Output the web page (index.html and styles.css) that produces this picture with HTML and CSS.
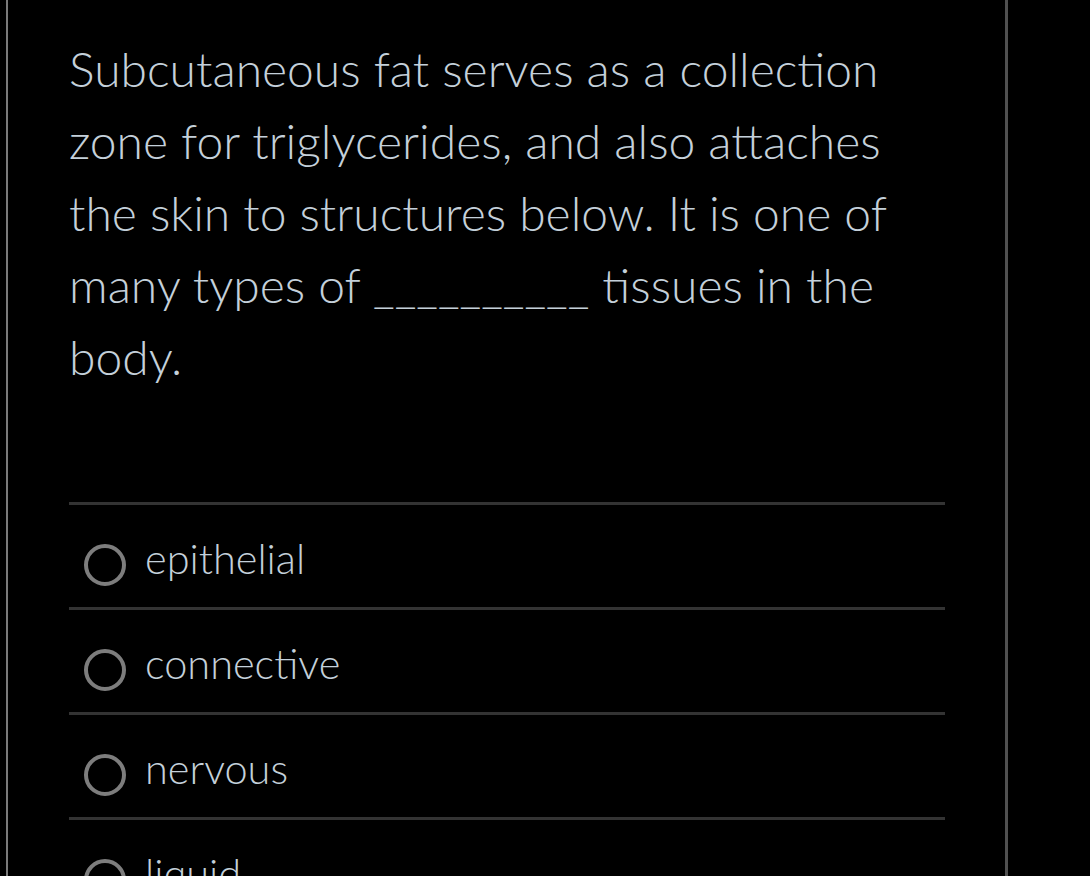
FILE: index.html
```html
<!DOCTYPE html>
<html lang="en">
<head>
<meta charset="utf-8">
<title>Question</title>
<link rel="stylesheet" href="styles.css">
</head>
<body>
<div class="card">
  <p class="question">Subcutaneous fat serves as a collection zone for triglycerides, and also attaches the skin to structures below. It is one of many types of <span class="blank">__________</span> tissues in the body.</p>
  <ul class="options">
    <li class="option"><span class="radio"></span><span class="label">epithelial</span></li>
    <li class="option"><span class="radio"></span><span class="label">connective</span></li>
    <li class="option"><span class="radio"></span><span class="label">nervous</span></li>
    <li class="option"><span class="radio"></span><span class="label">liquid</span></li>
  </ul>
</div>
</body>
</html>
```

FILE: styles.css
```css
html, body {
  margin: 0;
  padding: 0;
  background: #000;
  height: 100%;
  overflow: hidden;
}

.card {
  margin-left: 6px;
  width: 1002px;
  box-sizing: border-box;
  min-height: 1200px;
  border-left: 2px solid #7a7a7a;
  border-right: 3px solid #505050;
  padding: 33px 60px 0 61px;
  font-family: Lato, "Open Sans", sans-serif;
  font-weight: 300;
  color: #c4d0da;
}

.question {
  margin: 0;
  font-size: 48px;
  line-height: 72px;
}

.options {
  list-style: none;
  margin: 109px 0 0 0;
  padding: 0;
}

.option {
  display: flex;
  align-items: center;
  box-sizing: border-box;
  height: 105px;
  border-top: 3px solid #333;
  padding-top: 18px;
}

.radio {
  flex: none;
  width: 42px;
  height: 42px;
  box-sizing: border-box;
  border: 4px solid #7d7d7d;
  border-radius: 50%;
  margin-left: 15px;
  margin-right: 19px;
}

.label {
  font-size: 41.5px;
  line-height: 42px;
  margin-bottom: 14px;
}
```
